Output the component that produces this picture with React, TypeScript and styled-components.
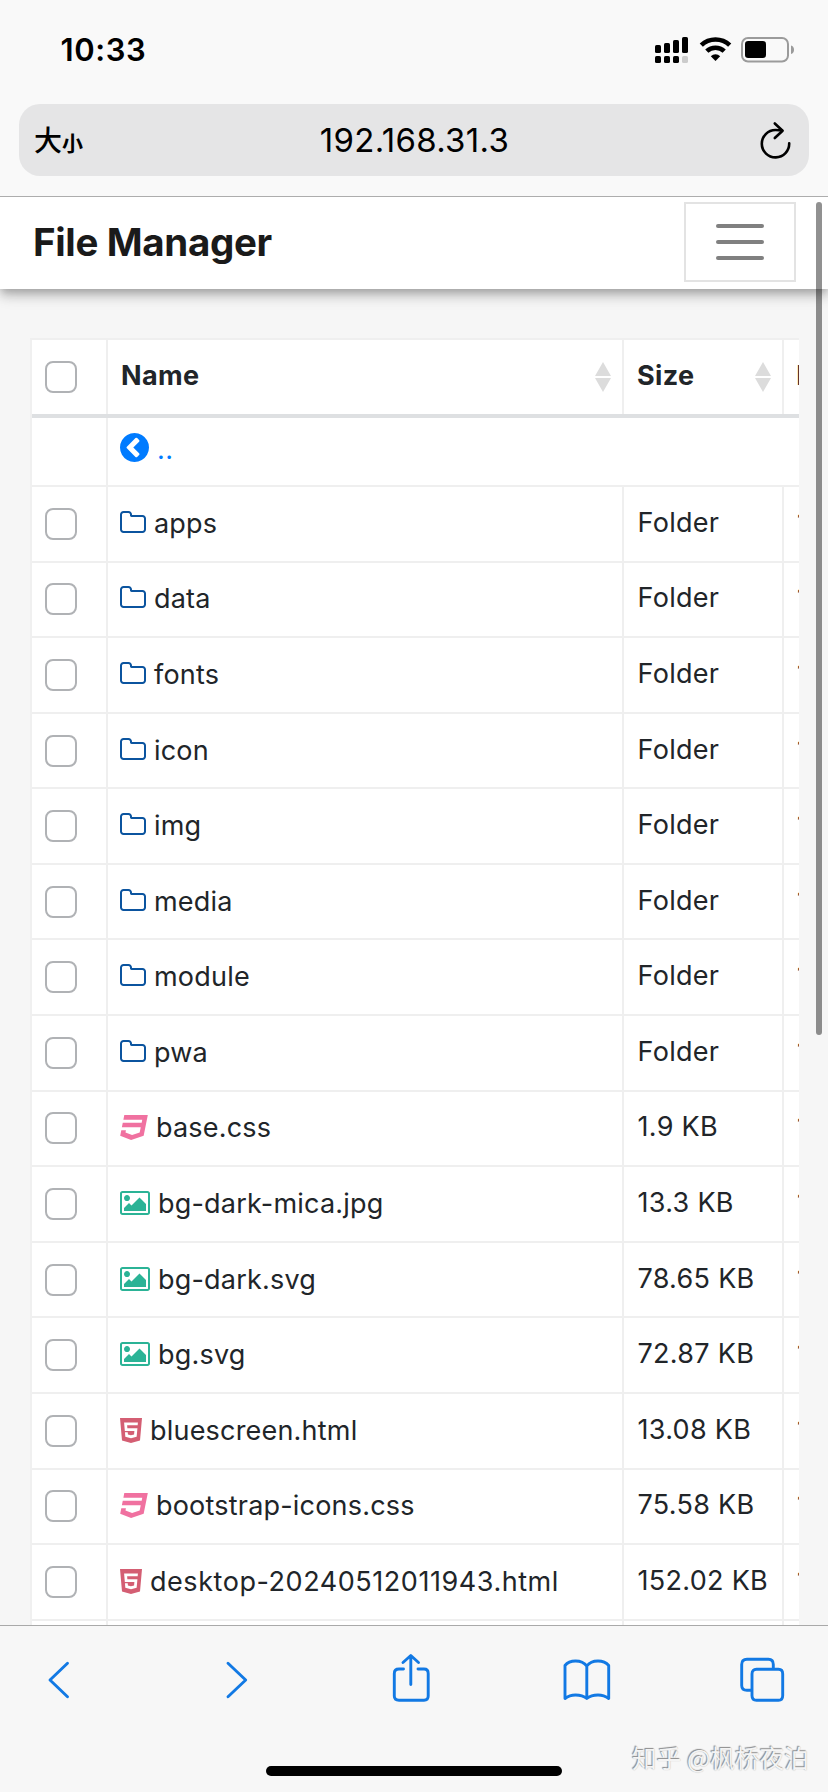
import React from "react";
import styled, { createGlobalStyle } from "styled-components";

const GlobalStyle = createGlobalStyle`
  * { box-sizing: border-box; }
  html, body { margin: 0; padding: 0; background: #f6f6f6; }
  body { font-family: Inter, "Noto Sans CJK SC", sans-serif; color: #212529; }
  svg { display: block; flex: none; }
`;

const Screen = styled.div`
  position: relative;
  width: 828px;
  height: 1792px;
  display: flex;
  flex-direction: column;
  overflow: hidden;
`;

const BrowserTop = styled.header`
  flex: none;
  height: 197px;
  background: #f9f9f9;
  border-bottom: 1px solid #adadad;
`;

const StatusBar = styled.div`
  height: 104px;
  padding: 30px 33px 0 60.5px;
  display: flex;
  justify-content: space-between;
`;

const Clock = styled.time`
  height: 40px;
  line-height: 40px;
  font-size: 31px;
  font-weight: 600;
  letter-spacing: 0.6px;
  color: #000;
`;

const AddressBar = styled.div`
  height: 72px;
  margin: 0 19px;
  padding: 0 16px 0 15px;
  border-radius: 21px;
  background: #e5e5e6;
  display: grid;
  grid-template-columns: 120px 1fr 118px;
  align-items: center;
  color: #000;
`;

const TextSize = styled.span`
  font-family: "Noto Sans CJK SC", sans-serif;
  font-weight: 500;
  font-size: 28px;
  line-height: 40px;
  white-space: nowrap;
  small { font-size: 21px; font-weight: 700; }
`;

const Address = styled.span`
  text-align: center;
  font-size: 33px;
  line-height: 40px;
  letter-spacing: 0.3px;
`;

const ReloadSlot = styled.span`
  justify-self: end;
`;

const Page = styled.main`
  flex: 1;
  min-height: 0;
  overflow: hidden;
  display: flex;
  flex-direction: column;
  background: #f6f6f6;
`;

const Navbar = styled.nav`
  flex: none;
  height: 92px;
  padding: 0 32px 0 33px;
  display: flex;
  align-items: center;
  justify-content: space-between;
  background: #fff;
  box-shadow: 0 8px 10px 0 rgba(0, 0, 0, 0.14), 0 2px 20px 0 rgba(0, 0, 0, 0.12), 0 4px 8px -2px rgba(0, 0, 0, 0.2);
`;

const Brand = styled.h1`
  margin: -3px 0 0;
  font-size: 38.5px;
  line-height: 50px;
  font-weight: 700;
  letter-spacing: -0.35px;
  color: #1a1a1a;
`;

const MenuButton = styled.button`
  width: 112px;
  height: 80px;
  margin-top: -2px;
  padding: 0;
  border: 2px solid #e3e3e3;
  background: #fff;
  display: flex;
  flex-direction: column;
  align-items: center;
  justify-content: center;
  gap: 12px;
`;

const MenuBar = styled.span`
  width: 48px;
  height: 4px;
  border-radius: 2px;
  background: #808080;
`;

const TableWrap = styled.section`
  flex: 1;
  min-height: 0;
  margin: 49px 29.5px 0 30px;
  overflow: hidden;
`;

const Table = styled.div`
  width: 940px;
  background: #fff;
  border-top: 2px solid #efefef;
  border-left: 2px solid #f0f0f0;
`;

const Row = styled.div<{ $kind?: "head" | "up" }>`
  display: grid;
  grid-template-columns: ${(p) => (p.$kind === "up" ? "76px 1fr" : "76px 516px 160px 1fr")};
  height: ${(p) => (p.$kind === "head" ? "78px" : p.$kind === "up" ? "69px" : "75.58px")};
  border-bottom: ${(p) => (p.$kind === "head" ? "4px solid #dee0e2" : "2px solid #efefef")};
  font-weight: ${(p) => (p.$kind === "head" ? 700 : 400)};
`;

const Cell = styled.div`
  min-width: 0;
  display: flex;
  align-items: center;
  border-right: 2px solid #efefef;
  padding: 0 12px;
  font-size: 27px;
  line-height: 40px;
  white-space: nowrap;
  &:last-child { border-right: 0; }
`;

const CheckCell = styled(Cell)`
  padding: 0 13px;
`;

const Check = styled.span`
  width: 32px;
  height: 32px;
  border: 2px solid #b0b2b5;
  border-radius: 8px;
  background: #fff;
`;

const HeadCell = styled(Cell)`
  justify-content: space-between;
  padding: 0 11px 0 13px;
  letter-spacing: 0.4px;
  span { margin-top: -3px; }
`;

const DateHead = styled(HeadCell)`
  padding-left: 12.3px;
`;

const FileName = styled.span<{ $wide: boolean }>`
  margin-left: 8px;
  letter-spacing: ${(p) => (p.$wide ? "0.55px" : "0.2px")};
`;

const IconBox = styled.span`
  position: relative;
  top: -1px;
`;

const UpLink = styled.a`
  display: flex;
  align-items: center;
  margin-top: -8px;
  color: #007bff;
  span { margin: 5px 0 0 8px; letter-spacing: 0.4px; }
`;

const SizeCell = styled(Cell)`
  padding: 0 0 2px 13.5px;
  letter-spacing: 0.3px;
`;

const DateCell = styled(SizeCell)`
  padding-left: 13px;
`;

const BottomBar = styled.footer`
  flex: none;
  height: 167px;
  background: #f7f7f7;
  border-top: 1px solid #a9a9a9;
`;

const Tools = styled.div`
  padding: 26px 38.5px 0 30.5px;
  display: flex;
  justify-content: space-between;
`;

const HomeIndicator = styled.div`
  width: 296px;
  height: 10px;
  margin: 58px auto 0;
  border-radius: 5px;
  background: #000;
`;

const ScrollThumb = styled.div`
  position: absolute;
  left: 816px;
  top: 202px;
  width: 6px;
  height: 833px;
  border-radius: 3px;
  background: rgba(0, 0, 0, 0.43);
`;

const Watermark = styled.div`
  position: absolute;
  right: 19px;
  bottom: 17px;
  font-family: "Noto Sans CJK SC", sans-serif;
  font-size: 24.7px;
  line-height: 36px;
  color: #f4f4f4;
  text-shadow: -1px -1px 1px #8a8a8a, 0 0 1px #bbb;
  white-space: nowrap;
`;

const GLYPHS = {
  folder: {
    box: "0 0 1664 1792", w: 26, color: "#0b549f",
    d: "M1536 1312v-704q0-40-28-68t-68-28h-704q-40 0-68-28t-28-68v-64q0-40-28-68t-68-28h-320q-40 0-68 28t-28 68v960q0 40 28 68t68 28h1216q40 0 68-28t28-68zm128-704v704q0 92-66 158t-158 66h-1216q-92 0-158-66t-66-158v-960q0-92 66-158t158-66h320q92 0 158 66t66 158v32h672q92 0 158 66t66 158z",
  },
  image: {
    box: "-64 0 1920 1792", w: 30, color: "#2bb396",
    d: "M576 576q0 80-56 136t-136 56-136-56-56-136 56-136 136-56 136 56 56 136zm1024 384v448h-1408v-192l320-320 160 160 512-512zm96-704h-1600q-13 0-22.5 9.5t-9.5 22.5v1216q0 13 9.5 22.5t22.5 9.5h1600q13 0 22.5-9.5t9.5-22.5v-1216q0-13-9.5-22.5t-22.5-9.5zm160 32v1216q0 66-47 113t-113 47h-1600q-66 0-113-47t-47-113v-1216q0-66 47-113t113-47h1600q66 0 113 47t47 113z",
  },
  css: {
    box: "0 0 1792 1792", w: 28, color: "#f071a0",
    d: "M275 128h1505l-266 1333-804 267-698-267 71-356h297l-29 147 422 161 486-161 68-339h-1208l58-297h1209l38-191h-1208z",
  },
  html: {
    box: "0 0 1408 1792", w: 22, color: "#d45e73",
    d: "M1130 597l16-175h-884l47 534h612l-22 228-197 53-196-53-13-140h-175l22 278 362 100h4v-1l359-99 50-544h-644l-15-181h674zm-1130-469h1408l-128 1438-578 162-574-162z",
  },
};

type Kind = keyof typeof GLYPHS;

const FILES: [Kind, string, string][] = [
  ["folder", "apps", "Folder"],
  ["folder", "data", "Folder"],
  ["folder", "fonts", "Folder"],
  ["folder", "icon", "Folder"],
  ["folder", "img", "Folder"],
  ["folder", "media", "Folder"],
  ["folder", "module", "Folder"],
  ["folder", "pwa", "Folder"],
  ["css", "base.css", "1.9 KB"],
  ["image", "bg-dark-mica.jpg", "13.3 KB"],
  ["image", "bg-dark.svg", "78.65 KB"],
  ["image", "bg.svg", "72.87 KB"],
  ["html", "bluescreen.html", "13.08 KB"],
  ["css", "bootstrap-icons.css", "75.58 KB"],
  ["html", "desktop-20240512011943.html", "152.02 KB"],
];

function FileIcon({ kind }: { kind: Kind }) {
  const g = GLYPHS[kind];
  return (
    <IconBox>
      <svg width={g.w} height={28} viewBox={g.box}>
        <path fill={g.color} d={g.d} />
      </svg>
    </IconBox>
  );
}

function SortIcon() {
  return (
    <svg width="16" height="30" viewBox="0 0 16 30" fill="#dcdcdc">
      <path d="M8 0l8 14H0z M0 16h16l-8 14z" />
    </svg>
  );
}

function StatusIcons() {
  return (
    <svg width="142" height="40" viewBox="653 30 142 40">
      <rect x="655" y="45" width="6" height="8" rx="1.6" />
      <rect x="664" y="43" width="6" height="10" rx="1.6" />
      <rect x="673" y="40" width="6" height="13" rx="1.6" />
      <rect x="682" y="37" width="6" height="16" rx="1.6" />
      <rect x="655" y="56" width="6" height="7" rx="1.6" />
      <rect x="664" y="56" width="6" height="7" rx="1.6" />
      <rect x="673" y="56" width="6" height="7" rx="1.6" />
      <rect x="682" y="56" width="6" height="7" rx="1.6" fill="#ccc" />
      <g fill="none" stroke="#000" strokeWidth="4.6">
        <path d="M701.3 45.2a20.5 20.5 0 0 1 28.4 0" />
        <path d="M706.8 51.2a12.6 12.6 0 0 1 17.4 0" />
      </g>
      <path d="M710.8 56.2a6.8 6.8 0 0 1 9.4 0l-4.7 4.8z" />
      <rect x="742" y="38" width="46" height="23.5" rx="6" fill="none" stroke="#9b9b9b" strokeWidth="2" />
      <rect x="745" y="41" width="21" height="17" rx="3.2" />
      <path d="M791 45.5c4 1 4 7.500 0 8.500z" fill="#9b9b9b" />
    </svg>
  );
}

function ReloadIcon() {
  return (
    <svg width="36" height="44" viewBox="756 118 36 44" fill="none" stroke="#000" strokeWidth="2.6" strokeLinecap="round" strokeLinejoin="round">
      <path d="M788.200 143.200a13.700 13.700 0 1 1-13.700-13.200q4 0 6.500.6" />
      <path d="M773.800 123.500l7.800 7.200-7.800 7.300" />
    </svg>
  );
}

// Each toolbar drawing sits in a 56px square with its optical centre near (28, 28).
const TOOLS = [
  "M36.500 11.200L19 28L36.500 44.700",
  "M22 11.200L39.700 28L22 44.700",
  "M21.500 17H17Q12.300 17 12.300 21.500V44Q12.300 48.200 17 48.200H42Q46.200 48.200 46.200 44V21.500Q46.200 17 42 17H36 M28.800 32.500V4 M21 10.500L28.800 3.500L36.500 10.500",
  "M28.800 46.500V14Q25 9 17.500 9Q10.500 9 7 13.500V46.500Q11.500 43 17.500 43Q24.500 43 28.800 46.500Q33 43 40 43Q46 43 50.700 46.500V13.500Q47 9 40 9Q32.500 9 28.800 14",
  "M17.500 38.300H13Q7.700 38.300 7.700 33.500V12.500Q7.700 7.300 13 7.300H34.500Q39.300 7.300 39.300 12.500V17 M22.500 17.300H44.500Q48.700 17.300 48.700 22V43.500Q48.700 48.300 44.500 48.300H22.500Q18 48.300 18 43.500V22Q18 17.300 22.500 17.300Z",
];

export default function App() {
  return (
    <Screen>
      <GlobalStyle />
      <BrowserTop>
        <StatusBar>
          <Clock>10:33</Clock>
          <StatusIcons />
        </StatusBar>
        <AddressBar>
          <TextSize>大<small>小</small></TextSize>
          <Address>192.168.31.3</Address>
          <ReloadSlot><ReloadIcon /></ReloadSlot>
        </AddressBar>
      </BrowserTop>
      <Page>
        <Navbar>
          <Brand>File Manager</Brand>
          <MenuButton aria-label="Menu">
            <MenuBar /><MenuBar /><MenuBar />
          </MenuButton>
        </Navbar>
        <TableWrap>
          <Table>
            <Row $kind="head">
              <CheckCell><Check /></CheckCell>
              <HeadCell><span>Name</span><SortIcon /></HeadCell>
              <HeadCell><span>Size</span><SortIcon /></HeadCell>
              <DateHead><span>Modified</span></DateHead>
            </Row>
            <Row $kind="up">
              <Cell />
              <Cell>
                <UpLink>
                  <svg width="29" height="29" viewBox="128 128 1536 1536">
                    <path fill="#007bff" d="M1037 1395l102-102q19-19 19-45t-19-45l-307-307 307-307q19-19 19-45t-19-45l-102-102q-19-19-45-19t-45 19l-454 454q-19 19-19 45t19 45l454 454q19 19 45 19t45-19zm627-499q0 209-103 385.500t-279.500 279.500-385.500 103-385.500-103-279.500-279.500-103-385.500 103-385.500 279.500-279.500 385.500-103 385.500 103 279.500 279.500 103 385.500z" />
                  </svg>
                  <span>..</span>
                </UpLink>
              </Cell>
            </Row>
            {FILES.map(([kind, name, size]) => (
              <Row key={name}>
                <CheckCell><Check /></CheckCell>
                <Cell><FileIcon kind={kind} /><FileName $wide={/\d/.test(name)}>{name}</FileName></Cell>
                <SizeCell>{size}</SizeCell>
                <DateCell>1</DateCell>
              </Row>
            ))}
            <Row>
              <CheckCell />
              <Cell />
              <SizeCell />
              <DateCell />
            </Row>
          </Table>
        </TableWrap>
      </Page>
      <BottomBar>
        <Tools>
          {TOOLS.map((d) => (
            <svg key={d} width="56" height="56" viewBox="0 0 56 56" fill="none" stroke="#1279e4" strokeWidth="2.900" strokeLinecap="round" strokeLinejoin="round">
              <path d={d} />
            </svg>
          ))}
        </Tools>
        <HomeIndicator />
      </BottomBar>
      <ScrollThumb />
      <Watermark>知乎 @枫桥夜泊</Watermark>
    </Screen>
  );
}
